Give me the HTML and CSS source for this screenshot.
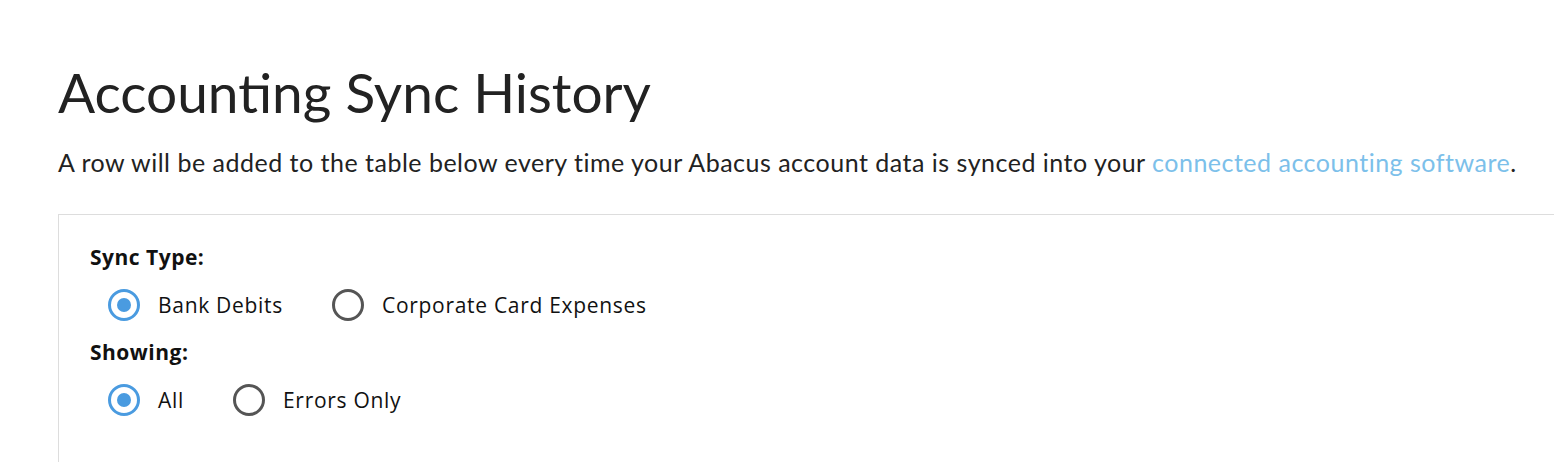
FILE: index.html
```html
<!DOCTYPE html>
<html>
<head>
<meta charset="utf-8">
<link rel="stylesheet" href="styles.css">
</head>
<body>
<main class="page">
  <h1 class="title">Accounting Sync History</h1>
  <p class="intro">A row will be added to the table below every time your Abacus account data is synced into your <a class="link" href="#">connected accounting software</a>.</p>
  <section class="card">
    <div class="group">
      <div class="group-label">Sync Type:</div>
      <div class="options">
        <label class="option"><span class="radio checked"></span><span class="opt-text">Bank Debits</span></label>
        <label class="option"><span class="radio"></span><span class="opt-text">Corporate Card Expenses</span></label>
      </div>
    </div>
    <div class="group">
      <div class="group-label">Showing:</div>
      <div class="options">
        <label class="option"><span class="radio checked"></span><span class="opt-text">All</span></label>
        <label class="option"><span class="radio"></span><span class="opt-text">Errors Only</span></label>
      </div>
    </div>
  </section>
</main>
</body>
</html>
```
FILE: styles.css
```css
html, body {
  margin: 0;
  padding: 0;
  background: #ffffff;
  overflow: hidden;
}
body {
  font-family: Lato, "Open Sans", sans-serif;
  color: #222222;
}
.page {
  padding: 59px 0 0 58px;
}
.title {
  margin: 0;
  font-family: Lato, sans-serif;
  font-weight: 400;
  font-size: 55px;
  line-height: 66px;
  color: #222222;
}
.intro {
  margin: 22px 0 0 0;
  font-family: Lato, sans-serif;
  font-size: 25px;
  line-height: 30px;
  letter-spacing: 0.5px;
  color: #222222;
}
.link {
  color: #7cc0ea;
  text-decoration: none;
}
.card {
  margin-top: 37px;
  width: 1600px;
  border: 1px solid #dddddd;
  padding: 28px 0 80px 31px;
  font-family: "Open Sans", sans-serif;
}
.group + .group {
  margin-top: 17px;
}
.group-label {
  font-weight: 700;
  font-size: 21px;
  line-height: 28px;
  letter-spacing: 0.5px;
  color: #111111;
}
.options {
  display: flex;
  align-items: center;
  gap: 49px;
  padding: 18px 0 0 18px;
}
.option {
  display: flex;
  align-items: center;
  gap: 18px;
}
.radio {
  box-sizing: border-box;
  width: 32px;
  height: 32px;
  border-radius: 50%;
  border: 3px solid #555555;
  display: flex;
  align-items: center;
  justify-content: center;
}
.radio.checked {
  border: 3.5px solid #4a9be0;
}
.radio.checked::after {
  content: "";
  width: 14px;
  height: 14px;
  border-radius: 50%;
  background: #4a9be0;
}
.opt-text {
  font-size: 21px;
  line-height: 28px;
  letter-spacing: 0.7px;
  color: #111111;
}
```
